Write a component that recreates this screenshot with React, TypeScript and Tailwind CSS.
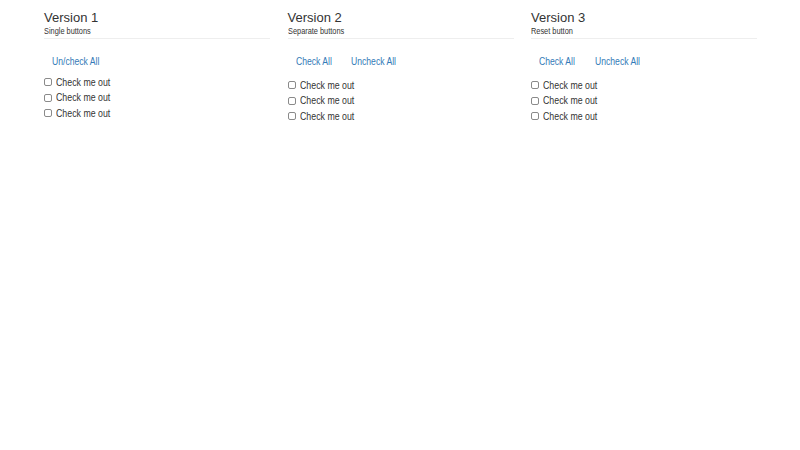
import React from "react";

function Box() {
  return (
    <span className="inline-block w-[8px] h-[8px] border border-[#8a8a8a] rounded-[2px] bg-white shrink-0" />
  );
}

function Item() {
  return (
    <div className="flex items-center h-[15.5px]">
      <Box />
      <span className="ml-[4px] block origin-left scale-x-[0.8] whitespace-nowrap text-[11px] leading-[15.5px] text-[#333]">
        Check me out
      </span>
    </div>
  );
}

function Col({
  title,
  sub,
  buttons,
  v1,
}: {
  title: string;
  sub: string;
  buttons: { label: string; w: string }[];
  v1?: boolean;
}) {
  return (
    <div className="w-[226px]">
      <div className="pt-[10px] pb-[2px] border-b border-[#eee]">
        <div className="text-[13px] leading-[16px] text-[#333]">{title}</div>
        <div className="origin-left scale-x-[0.82] whitespace-nowrap text-[9px] leading-[10px] text-[#333]">
          {sub}
        </div>
      </div>
      <div className="flex pt-[14.5px] pl-[8px] text-[10.5px] leading-[14px] text-[#337ab7]">
        {buttons.map((b) => (
          <div key={b.label} className={"origin-left scale-x-[0.82] whitespace-nowrap " + b.w}>
            {b.label}
          </div>
        ))}
      </div>
      <div className={v1 ? "pt-[7px]" : "pt-[10px]"}>
        <Item />
        <Item />
        <Item />
      </div>
    </div>
  );
}

export default function App() {
  return (
    <div className="w-[800px] h-[450px] bg-white" style={{ fontFamily: '"Liberation Sans", Arial, sans-serif' }}>
      <div className="flex pl-[44px] gap-[17.5px]">
        <Col title="Version 1" sub="Single buttons" buttons={[{ label: "Un/check All", w: "w-[60px]" }]} v1 />
        <Col
          title="Version 2"
          sub="Separate buttons"
          buttons={[
            { label: "Check All", w: "w-[55px]" },
            { label: "Uncheck All", w: "w-[60px]" },
          ]}
        />
        <Col
          title="Version 3"
          sub="Reset button"
          buttons={[
            { label: "Check All", w: "w-[56px]" },
            { label: "Uncheck All", w: "w-[60px]" },
          ]}
        />
      </div>
    </div>
  );
}
